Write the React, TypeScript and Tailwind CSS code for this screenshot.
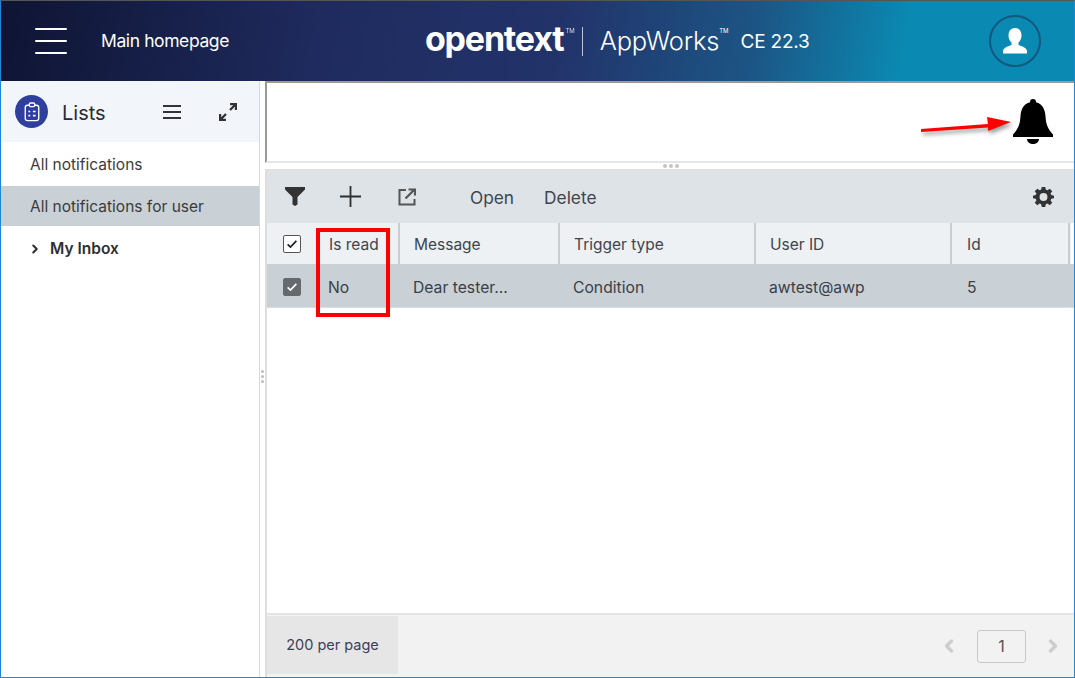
import { ChevronLeft, ChevronRight, ChevronRight as Caret } from "lucide-react";

const font = { fontFamily: "Inter, 'Liberation Sans', sans-serif" };

function Check({ dark }: { dark?: boolean }) {
  return (
    <div
      className={`w-[18px] h-[18px] rounded-[2px] flex items-center justify-center border ${
        dark ? "bg-[#666a6e] border-[#666a6e]" : "bg-white border-[#555]"
      }`}
    >
      <svg viewBox="0 0 16 16" className="w-[14px] h-[14px]" fill="none" stroke={dark ? "#fff" : "#222"} strokeWidth="2">
        <path d="M3 8.5l3.2 3L13 4.5" />
      </svg>
    </div>
  );
}

const columns = [
  { label: "Is read", value: "No", width: "w-[83px]", pad: "pl-[12px]", cell: "pl-[11px]" },
  { label: "Message", value: "Dear tester...", width: "w-[160px]", pad: "pl-[14px]", cell: "pl-[13px]" },
  { label: "Trigger type", value: "Condition", width: "w-[196px]", pad: "pl-[14px]", cell: "pl-[13px]" },
  { label: "User ID", value: "awtest@awp", width: "w-[196px]", pad: "pl-[14px]", cell: "pl-[13px]" },
  { label: "Id", value: "5", width: "w-[118px]", pad: "pl-[15px]", cell: "pl-[15px]" },
];

export default function App() {
  return (
    <div
      style={font}
      className="relative w-[1075px] h-[678px] overflow-hidden bg-white flex flex-col border-x border-b border-x-[#1e88d8] border-b-[#1e88d8] border-t border-t-[#555] text-[#333]"
    >
      {/* Header */}
      <header className="h-[80px] shrink-0 flex items-center text-white bg-[linear-gradient(100deg,#0e1433_0%,#1f2b5e_30%,#22336a_52%,#1c5585_70%,#0a8ab2_84%,#0a8ab2_100%)]">
        <svg viewBox="0 0 32 26" className="ml-[34px] w-[32px] h-[26px]" stroke="#fff" strokeWidth="2" strokeLinecap="round">
          <path d="M1 1h30M1 13h30M1 25h30" />
        </svg>
        <span className="ml-[34px] text-[17.500px] tracking-[-0.4px]">Main homepage</span>
        <div className="ml-[196px] flex items-center">
          <span className="text-[34px] font-bold tracking-[-1.200px] leading-none pb-[5px]">opentext</span>
          <span className="text-[6px] self-start mt-[4px] ml-[2px] opacity-80">TM</span>
          <div className="w-px h-[29px] bg-white/70 ml-[7px] mr-[17px]" />
          <span className="text-[25.500px] font-light tracking-[-0.2px]">AppWorks</span>
          <span className="text-[6px] self-start mt-[4px]">TM</span>
          <span className="ml-[12px] text-[19px] mt-[3px] tracking-[-0.2px]">CE 22.3</span>
        </div>
        <div className="ml-auto mr-[33px] w-[52px] h-[52px] rounded-full border-2 border-[#14577f] flex items-center justify-center">
          <svg viewBox="0 0 26 28" className="w-[26px] h-[28px]" fill="#fff">
            <path d="M13 1c4 0 6.500 3 6.500 7.500 0 3-1.200 5.500-3 7v2.500c3 1 8.500 2.500 8.500 6.500v2H1v-2c0-4 5.500-5.500 8.500-6.500v-2.500c-1.800-1.500-3-4-3-7C6.500 4 9 1 13 1z" />
          </svg>
        </div>
      </header>

      <div className="flex-1 flex min-h-0">
        {/* Sidebar */}
        <aside className="w-[258px] shrink-0 flex flex-col">
          <div className="h-[61px] bg-[#f2f6fb] flex items-center pl-[14px]">
            <div className="w-[33px] h-[33px] rounded-full bg-[#2f3f9e] flex items-center justify-center">
              <svg viewBox="0 0 20 22" className="w-[18px] h-[20px]" fill="none" stroke="#fff" strokeWidth="1.500">
                <rect x="2.500" y="3.500" width="15" height="17" rx="2.500" />
                <rect x="7" y="1" width="6" height="4" rx="1.500" fill="#2f3f9e" />
                <path d="M6 10.500h2M11 10.500h3M6 15h2M11 15h3" strokeWidth="1.800" />
              </svg>
            </div>
            <span className="ml-[14px] pt-[2px] text-[20px] text-[#2b2b33]">Lists</span>
            <svg viewBox="0 0 18 16" className="ml-[57px] w-[18px] h-[16px]" stroke="#333" strokeWidth="2.200">
              <path d="M0 2h18M0 8h18M0 14h18" />
            </svg>
            <svg viewBox="0 0 18 18" className="ml-[38px] w-[18px] h-[18px]" fill="none" stroke="#333" strokeWidth="2.400">
              <path d="M11 1h6v6M17 1l-6 6M7 17H1v-6M1 17l6-6" />
            </svg>
          </div>
          <div className="h-[44px] flex items-center pl-[29px] pt-[2px] text-[15.500px] text-[#3b3b3b]">All notifications</div>
          <div className="h-[40px] flex items-center pl-[29px] pt-[2px] text-[15.500px] text-[#3b3b3b] bg-[#c9d0d6]">
            All notifications for user
          </div>
          <div className="h-[44px] flex items-center pl-[27px] pt-[2px] text-[15.500px] font-semibold text-[#2e2e33]">
            <Caret className="w-[14px] h-[14px] mr-[8px]" strokeWidth={3.500} />
            My Inbox
          </div>
        </aside>

        {/* Splitter */}
        <div className="w-[6px] shrink-0 relative border-l border-[#d9d9d9]">
          <div className="absolute left-[1px] top-[289px] flex flex-col gap-[2px]">
            <span className="w-[3px] h-[3px] rounded-full bg-[#bbb]" />
            <span className="w-[3px] h-[3px] rounded-full bg-[#bbb]" />
            <span className="w-[3px] h-[3px] rounded-full bg-[#bbb]" />
          </div>
        </div>

        {/* Main */}
        <main className="flex-1 flex flex-col min-w-0">
          <div className="h-[82px] shrink-0 border-t-2 border-l-2 border-t-[#9a9a9a] border-l-[#9a9a9a] flex items-center justify-end pr-[21px] border-b-2 border-b-[#e6e6e6]">
            <svg viewBox="0 0 40 46" className="w-[40px] h-[46px]" fill="#000">
              <circle cx="20" cy="3" r="3" />
              <path d="M20 3c8 0 12 6 12.500 14 .5 9 2.500 13 7.500 18.500V38H0v-2.500C5 30 7 26 7.500 17 8 9 12 3 20 3z" />
              <path d="M14 40h12c0 3-3 5-6 5s-6-2-6-5z" />
            </svg>
          </div>
          <div className="h-[6px] shrink-0 flex items-center justify-center gap-[2px] pl-[2px]">
            <span className="w-[4px] h-[4px] rounded-full bg-[#c4c4c4]" />
            <span className="w-[4px] h-[4px] rounded-full bg-[#c4c4c4]" />
            <span className="w-[4px] h-[4px] rounded-full bg-[#c4c4c4]" />
          </div>

          <div className="flex-1 flex flex-col min-h-0 border-t border-l-2 border-[#dedede]">
            {/* Toolbar */}
            <div className="h-[53px] shrink-0 bg-[#dde3e7] flex items-center text-[17.300px] text-[#3f454c]">
              <svg viewBox="0 0 20 19" className="ml-[18px] w-[20px] h-[19px]" fill="#333">
                <path d="M0 0h20v2.500L12.500 10v7.500L10 19l-2.500-1.500V10L0 2.500z" />
              </svg>
              <svg viewBox="0 0 21 21" className="ml-[35px] w-[21px] h-[21px]" stroke="#2e2e2e" strokeWidth="1.800">
                <path d="M10.500 0v21M0 10.500h21" />
              </svg>
              <svg viewBox="0 0 18 18" className="ml-[37px] w-[18px] h-[18px]" fill="none" stroke="#555" strokeWidth="2">
                <path d="M8 2H1.500v14.500h15V11" />
                <path d="M7.500 10.500L16 2M10.500 1.500H17v6" strokeWidth="2.200" />
              </svg>
              <span className="ml-[54px] pt-[2px]">Open</span>
              <span className="ml-[30px] pt-[2px]">Delete</span>
              <svg viewBox="0 0 24 24" className="ml-auto mr-[20px] w-[21px] h-[21px]" fill="#333">
                <path
                  fillRule="evenodd"
                  d="M10 1h4l.6 3.100 1.900.8L19.100 3 22 5.900l-1.900 2.600.8 1.900L24 11v3l-3.100.6-.8 1.900L22 19.100 19.100 22l-2.600-1.900-1.900.8L14 24h-4l-.6-3.100-1.900-.8L4.900 22 2 19.100l1.900-2.600-.8-1.900L0 14v-3l3.100-.6.8-1.900L2 5.900 4.900 3l2.600 1.900 1.900-.8zM12 8a4.500 4.500 0 100 9 4.500 4.500 0 000-9z"
                />
              </svg>
            </div>

            {/* Column headers */}
            <div className="h-[41px] shrink-0 flex bg-[#edf1f4] text-[15.500px] text-[#3f454c] mr-[3px]">
              <div className="w-[50px] shrink-0 pl-[16px] flex items-center">
                <Check />
              </div>
              {columns.map((c) => (
                <div key={c.label} className={`${c.width} ${c.pad} pt-[2px] shrink-0 flex items-center border-r-2 border-[#c9cdd0]`}>
                  {c.label}
                </div>
              ))}
            </div>

            {/* Row */}
            <div className="h-[44px] pt-[2px] shrink-0 flex bg-[#c9d0d6] text-[15.700px] text-[#3a4046] border-b border-[#dcdcdc]">
              <div className="w-[50px] shrink-0 pl-[16px] flex items-center">
                <Check dark />
              </div>
              {columns.map((c) => (
                <div key={c.label} className={`${c.width} ${c.cell} pt-[3px] shrink-0 flex items-center`}>
                  {c.value}
                </div>
              ))}
            </div>

            <div className="flex-1" />

            {/* Footer */}
            <div className="h-[64px] shrink-0 bg-[#f2f2f2] border-t-2 border-[#e4e4e4] flex items-center">
              <div className="w-[131px] h-[58px] self-start bg-[#e6e6e6] mt-[1px] flex items-center justify-center text-[14.500px] text-[#3d3f58]">
                200 per page
              </div>
              <ChevronLeft className="ml-auto w-[20px] h-[20px] text-[#cdcdcd]" strokeWidth={4} />
              <div className="ml-[18px] w-[49px] h-[33px] rounded-[3px] border border-[#c8c8c8] flex items-center justify-center text-[16px] text-[#555]">
                1
              </div>
              <ChevronRight className="ml-[17px] mr-[11px] w-[20px] h-[20px] text-[#cdcdcd]" strokeWidth={4} />
            </div>
          </div>
        </main>
      </div>

      {/* Annotations */}
      <div className="absolute left-[315px] top-[227px] w-[74px] h-[89px] border-[4px] border-[#f00] pointer-events-none" />
      <svg
        className="absolute left-[918px] top-[110px] pointer-events-none drop-shadow-[2px_3px_2px_rgba(0,0,0,0.4)]"
        width="96"
        height="26"
        viewBox="0 0 96 26"
      >
        <path d="M2 18L69 13 68 6 92 11 69 20 69 16.500 2 21z" fill="#f00" />
      </svg>
    </div>
  );
}
